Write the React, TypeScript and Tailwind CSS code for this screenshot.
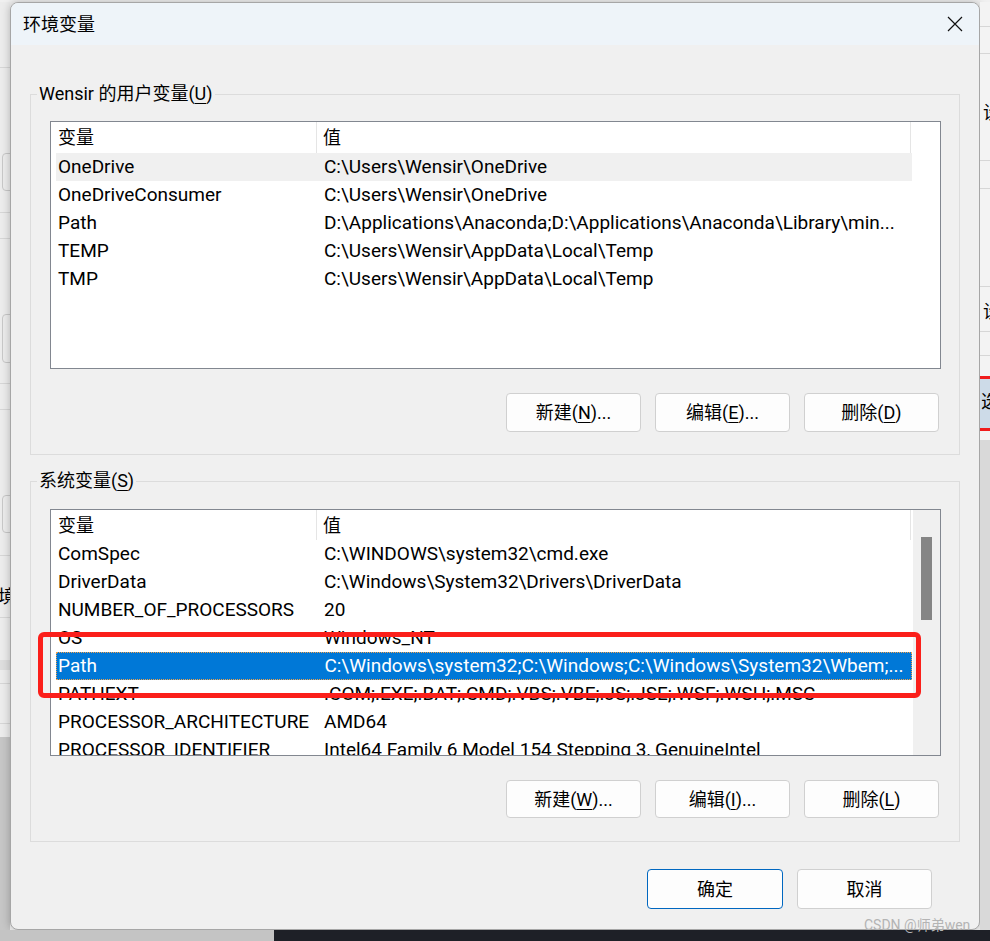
import React from "react"

type Row = [string, string]

const userVars: Row[] = [
  ["OneDrive", "C:\\Users\\Wensir\\OneDrive"],
  ["OneDriveConsumer", "C:\\Users\\Wensir\\OneDrive"],
  ["Path", "D:\\Applications\\Anaconda;D:\\Applications\\Anaconda\\Library\\min..."],
  ["TEMP", "C:\\Users\\Wensir\\AppData\\Local\\Temp"],
  ["TMP", "C:\\Users\\Wensir\\AppData\\Local\\Temp"],
]

const systemVars: Row[] = [
  ["ComSpec", "C:\\WINDOWS\\system32\\cmd.exe"],
  ["DriverData", "C:\\Windows\\System32\\Drivers\\DriverData"],
  ["NUMBER_OF_PROCESSORS", "20"],
  ["OS", "Windows_NT"],
  ["Path", "C:\\Windows\\system32;C:\\Windows;C:\\Windows\\System32\\Wbem;..."],
  ["PATHEXT", ".COM;.EXE;.BAT;.CMD;.VBS;.VBE;.JS;.JSE;.WSF;.WSH;.MSC"],
  ["PROCESSOR_ARCHITECTURE", "AMD64"],
  ["PROCESSOR_IDENTIFIER", "Intel64 Family 6 Model 154 Stepping 3, GenuineIntel"],
]

function VarList({
  rows,
  height,
  headerHeight,
  hovered,
  selected,
  scrollbar,
}: {
  rows: Row[]
  height: string
  headerHeight: string
  hovered?: number
  selected?: number
  scrollbar?: boolean
}) {
  return (
    <div className={`flex w-[891px] overflow-hidden border border-[#828790] bg-white ${height}`}>
      <div className="flex w-[862px] flex-col pl-[5px]">
        {/* Header */}
        <div className={`flex shrink-0 ${headerHeight}`}>
          <div className="flex w-[261px] items-center border-r border-[#e5e5e5] pl-[2px] text-[18px]">变量</div>
          <div className="flex w-[594px] items-center border-r border-[#e5e5e5] pl-[6px] text-[18px]">值</div>
        </div>
        {rows.map(([name, value], i) => {
          const isSel = i === selected
          const isHov = i === hovered
          return (
            <div
              key={name + i}
              className={`flex h-[28px] w-[856px] shrink-0 items-center whitespace-nowrap text-[19px] ${
                isSel
                  ? "border border-dotted border-[#f3a24a] bg-[#0078d7] text-white"
                  : isHov
                  ? "bg-[#f0f0f0] text-black"
                  : "text-black"
              }`}
            >
              <div className={`w-[262px] overflow-hidden ${isSel ? "pl-[1px]" : "pl-[2px]"}`}>{name}</div>
              <div className="w-[594px] overflow-hidden pl-[6px]">{value}</div>
            </div>
          )
        })}
      </div>
      {scrollbar ? (
        <div className="ml-auto w-[27px] bg-[#f0f0f0] pt-[27px] pl-[8px]">
          <div className="h-[83px] w-[11px] bg-[#858585]" />
        </div>
      ) : null}
    </div>
  )
}

function WinButton({
  children,
  primary,
  size,
}: {
  children: React.ReactNode
  primary?: boolean
  size: string
}) {
  return (
    <button
      className={`flex items-center justify-center rounded-[4px] border bg-[#fdfdfd] text-[18px] text-black ${
        primary ? "border-[#0067c0]" : "border-[#d0d0d0]"
      } ${size}`}
    >
      {children}
    </button>
  )
}

function Mn({ pre, k, post }: { pre: string; k: string; post: string }) {
  return (
    <span>
      {pre}(<span className="underline underline-offset-[3px]">{k}</span>){post}
    </span>
  )
}

function Line({ mt }: { mt: string }) {
  return <div className={`h-px shrink-0 bg-[#d6d6d6] ${mt}`} />
}

export default function App() {
  return (
    <div className="relative flex h-[941px] w-[990px] flex-col overflow-hidden bg-[#f0f0f0] font-['Roboto','Noto_Sans_CJK_SC',sans-serif] text-black">
      <div className="h-[2px] shrink-0" />

      <div className="flex h-[928px] shrink-0">
        {/* Desktop behind: left strip */}
        <div className="flex w-[10px] shrink-0 flex-col overflow-hidden bg-[#ececec]">
          <Line mt="mt-[65px]" />
          <div className="ml-[2px] mt-[85px] h-[38px] w-[14px] shrink-0 rounded-[4px] border border-[#c8c8c8]" />
          <Line mt="mt-[21px]" />
          <Line mt="mt-[25px]" />
          <div className="ml-[2px] mt-[75px] h-[49px] w-[14px] shrink-0 rounded-[4px] border border-[#c8c8c8]" />
          <Line mt="mt-[20px]" />
          <Line mt="mt-[25px]" />
          <div className="ml-[2px] mt-[85px] h-[38px] w-[14px] shrink-0 rounded-[4px] border border-[#c8c8c8]" />
          <Line mt="mt-[22px]" />
          <div className="ml-[-2px] mt-[30px] h-[22px] shrink-0 text-[18px] leading-[22px]">境</div>
          <Line mt="mt-[9px]" />
          <div className="mt-[42px] h-[10px] shrink-0 bg-[#dedede]" />
          <Line mt="mt-[13px]" />
          <Line mt="mt-[39px]" />
          <div className="mt-[13px] flex-1 bg-[#c6c6c6]" />
        </div>

        {/* Dialog window */}
        <div className="flex h-[928px] w-[970px] shrink-0 flex-col overflow-hidden rounded-[8px] border border-[#a6a6a6] bg-[#f0f0f0] shadow-[0_0_8px_rgba(0,0,0,0.25)]">
          {/* Title bar */}
          <div className="flex h-[42px] shrink-0 items-center justify-between bg-[#eef4f9] pl-[12px] pr-[16px]">
            <span className="text-[18px]">环境变量</span>
            <svg width="16" height="16" viewBox="0 0 16 16" fill="none">
              <path d="M1 1L15 15M15 1L1 15" stroke="#111" strokeWidth="1.2" />
            </svg>
          </div>

          <div className="flex flex-col px-[19px]">
            {/* User variables */}
            <div className="relative mt-[49px] h-[361px] w-[930px] border border-[#dcdcdc] pl-[19px] pt-[26px]">
              <span className="absolute left-[6px] top-[-13px] bg-[#f0f0f0] px-[2px] text-[18px] leading-[24px]">
                <Mn pre="Wensir 的用户变量" k="U" post="" />
              </span>
              <VarList rows={userVars} height="h-[248px]" headerHeight="h-[31px]" hovered={0} />
              <div className="mt-[24px] flex w-[889px] justify-end gap-[14px]">
                <WinButton size="h-[39px] w-[135px]">
                  <Mn pre="新建" k="N" post="..." />
                </WinButton>
                <WinButton size="h-[39px] w-[135px]">
                  <Mn pre="编辑" k="E" post="..." />
                </WinButton>
                <WinButton size="h-[39px] w-[135px]">
                  <Mn pre="删除" k="D" post="" />
                </WinButton>
              </div>
            </div>

            {/* System variables */}
            <div className="relative mt-[26px] h-[361px] w-[930px] border border-[#dcdcdc] pl-[19px] pt-[27px]">
              <span className="absolute left-[6px] top-[-13px] bg-[#f0f0f0] px-[2px] text-[18px] leading-[24px]">
                <Mn pre="系统变量" k="S" post="" />
              </span>
              <VarList rows={systemVars} height="h-[247px]" headerHeight="h-[30px]" selected={4} scrollbar />
              <div className="mt-[24px] flex w-[889px] justify-end gap-[14px]">
                <WinButton size="h-[38px] w-[135px]">
                  <Mn pre="新建" k="W" post="..." />
                </WinButton>
                <WinButton size="h-[38px] w-[135px]">
                  <Mn pre="编辑" k="I" post="..." />
                </WinButton>
                <WinButton size="h-[38px] w-[135px]">
                  <Mn pre="删除" k="L" post="" />
                </WinButton>
              </div>
            </div>

            {/* OK / Cancel */}
            <div className="mt-[27px] flex justify-end gap-[14px] pr-[28px]">
              <WinButton primary size="h-[40px] w-[136px]">确定</WinButton>
              <WinButton size="h-[40px] w-[135px]">取消</WinButton>
            </div>
          </div>
        </div>

        {/* Desktop behind: right strip */}
        <div className="flex w-[10px] shrink-0 flex-col overflow-hidden bg-[#f3f3f3]">
          <Line mt="mt-[24px]" />
          <Line mt="mt-[26px]" />
          <div className="mt-[48px] h-[22px] shrink-0 pl-[3px] text-[18px] leading-[22px]">设</div>
          <Line mt="mt-[36px]" />
          <Line mt="mt-[27px]" />
          <Line mt="mt-[97px]" />
          <div className="mt-[14px] h-[22px] shrink-0 pl-[3px] text-[18px] leading-[22px]">设</div>
          <Line mt="mt-[8px]" />
          <Line mt="mt-[23px]" />
          <div className="mt-[20px] h-[55px] shrink-0 border-y-[3px] border-[#f01c1c] bg-[#cddbe8] pl-[1px] pt-[12px] text-[18px] leading-[22px]">
            选
          </div>
          <div className="mt-[9px] flex-1 bg-[#d9d9d9]" />
        </div>
      </div>

      {/* Desktop behind: bottom strip */}
      <div className="flex h-[11px] shrink-0">
        <div className="w-[274px] bg-[#c4c4c4]" />
        <div className="flex-1 bg-[#1e2027]" />
      </div>

      {/* Red annotation box */}
      <div className="absolute left-[38px] top-[632px] h-[66px] w-[883px] rounded-[6px] border-[5px] border-[#fb1f1a]" />

      {/* Watermark */}
      <div className="absolute left-[864px] top-[915px] whitespace-nowrap text-[14px] leading-[20px] text-[#b4b4b4]">
        CSDN @师弟wen
      </div>
    </div>
  )
}
